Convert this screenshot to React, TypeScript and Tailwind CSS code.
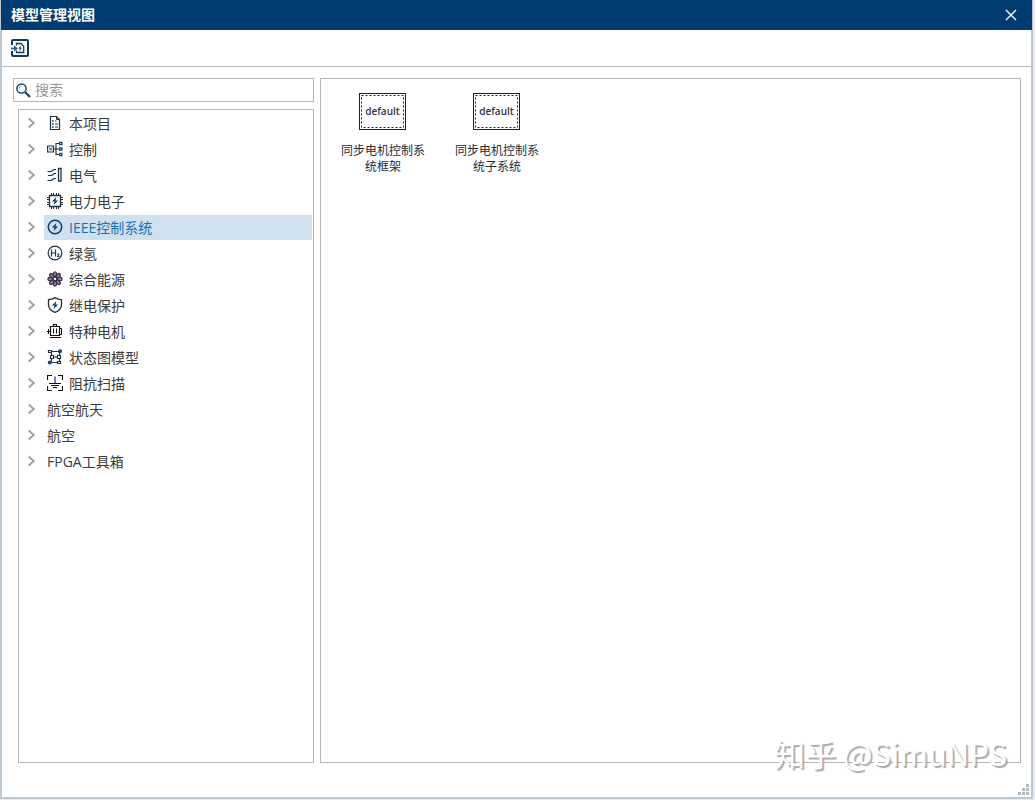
import { useState, type ReactNode } from "react";

const ink = "#26303c";
const navy = "#0f4672";

function Icon({ children }: { children: ReactNode }) {
  return (
    <svg viewBox="0 0 16 16" className="mb-px h-4 w-4 shrink-0" fill="none" stroke={ink} strokeWidth="1.2" aria-hidden="true">
      {children}
    </svg>
  );
}

const bolt = <path d="M9.3 4 4.8 8.6h2.6L6.7 12l4.5-4.6H8.6z" fill={navy} stroke="none" />;

const ProjectIcon = () => (
  <Icon>
    <path d="M3.500 1.500h6l3 3v10h-9z" />
    <path d="M9.500 1.500v3h3" strokeWidth="1" />
    <path d="M5 6h1.700M5 9h1.700M5 12h1.700" stroke={navy} strokeWidth="1.700" />
    <path d="M8 6h1.500M8 9h3M8 12h3" />
  </Icon>
);

const ControlIcon = () => (
  <Icon>
    <path d="M.5 5h6v6h-6z" />
    <path d="m2 6.500 3 3M5 6.500l-3 3" strokeWidth="1" />
    <path d="M6.500 8h6M9 8V2.500h3.500M9 8v5.500h3.500" />
    <g fill="#fff" stroke={navy} strokeWidth="1.300">
      <path d="M12.700 1.400h2.200v2.200h-2.200zM12.700 6.900h2.200v2.200h-2.200zM12.700 12.400h2.200v2.200h-2.200z" />
    </g>
  </Icon>
);

const ElectricIcon = () => (
  <Icon>
    <path d="M.5 4.500h4M6.500 2.500H9M1 8.500h4M7 6.500h2M.5 13.500h4M6.500 11.500H9" />
    <path d="m4 4.500 3-2M4.500 8.500l3-2M4 13.500l3-2" stroke={navy} strokeWidth="1.500" />
    <path d="M11.500 1.500h2.500v12.500h-2.500z" strokeWidth="1.300" />
  </Icon>
);

const ChipIcon = () => (
  <Icon>
    <path d="M2.500 2.500h11v11h-11z" strokeWidth="1.300" />
    <path d="M4.500 0v2.500M6.500 0v2.500M9.500 0v2.500M11.500 0v2.500M4.500 13.500V16M6.500 13.500V16M9.500 13.500V16M11.500 13.500V16M0 4.500h2.500M0 6.500h2.500M0 9.500h2.500M0 11.500h2.500M13.500 4.500H16M13.500 6.500H16M13.500 9.500H16M13.500 11.500H16" strokeWidth="1" />
    {bolt}
  </Icon>
);

const BoltCircleIcon = () => (
  <Icon>
    <circle cx="8" cy="8" r="6.700" stroke="#143a66" strokeWidth="1.500" />
    {bolt}
  </Icon>
);

const HydrogenIcon = () => (
  <Icon>
    <circle cx="8" cy="8" r="6.800" strokeWidth="1.200" />
    <path d="M4.500 4.500v7M8.500 4.500v7M4.500 8h4" stroke="#123c5c" strokeWidth="1.200" />
    <path d="M10 9h2v1.200l-2 1.300h2.500" stroke={navy} strokeWidth="1" />
  </Icon>
);

const EnergyIcon = () => (
  <Icon>
    <g stroke="#3f3147" strokeWidth="1.300">
      {[0, 45, 90, 135, 180, 225, 270, 315].map((angle) => (
        <path key={angle} d="M8 6.500C5.800 4.500 6 .9 8 .9s2.200 3.600 0 5.600z" fill="#9a8fa0" transform={`rotate(${angle} 8 8)`} />
      ))}
      <circle cx="8" cy="8" r="1.800" fill="#fff" />
    </g>
  </Icon>
);

const ShieldIcon = () => (
  <Icon>
    <path d="M8 .6c2 1.400 4 2 6.500 2.100v5c0 3.700-2.600 6.100-6.500 7.700-3.900-1.600-6.500-4-6.500-7.700v-5C4 2.600 6 2 8 .6z" strokeWidth="1.300" />
    {bolt}
  </Icon>
);

const MotorIcon = () => (
  <Icon>
    <g stroke="#111" strokeWidth="1">
      <path d="M3.500 3.500h9v9h-9zM6.500 3.500v-2h3v2" strokeWidth="1.200" />
      <path d="M6.500 5.500v5M9.500 5.500v5" />
      <path d="M0 8.500h3.500M1.500 6v5M12.500 5.500h2v6h-2" />
      <path d="M3 14.500h11" />
    </g>
  </Icon>
);

const StateIcon = () => (
  <Icon>
    <path d="M1.500 1.500h3v2h-3zM3.500 6.500h3v3h-3zM10.500 6.500h3v3h-3zM10.500 12.500h3v2h-3z" />
    <path d="M5 2.500h6M6.500 8h4M4 13.500h6.500M4.500 4v2.500M4.500 9.500v3M12.500 9.500v3M12.500 3.500v3" />
    <circle cx="13" cy="2.300" r="2" fill={navy} stroke="none" />
    <circle cx="2.800" cy="13.500" r="2" fill={navy} stroke="none" />
  </Icon>
);

const ScanIcon = () => (
  <Icon>
    <path d="M.5 5V.5h4.500M11 .5h4.500V5M.5 11v4.500H5M15.500 11v4.500H11" stroke="#111" />
    <path d="M8 1.500V8" stroke="#4a4f8a" strokeWidth="1.500" />
    <path d="M2 8.500h12M4 10.500h8M6 12.500h4" stroke="#111" strokeWidth="1" />
  </Icon>
);

const nodes: { label: string; icon?: () => ReactNode }[] = [
  { label: "本项目", icon: ProjectIcon },
  { label: "控制", icon: ControlIcon },
  { label: "电气", icon: ElectricIcon },
  { label: "电力电子", icon: ChipIcon },
  { label: "IEEE控制系统", icon: BoltCircleIcon },
  { label: "绿氢", icon: HydrogenIcon },
  { label: "综合能源", icon: EnergyIcon },
  { label: "继电保护", icon: ShieldIcon },
  { label: "特种电机", icon: MotorIcon },
  { label: "状态图模型", icon: StateIcon },
  { label: "阻抗扫描", icon: ScanIcon },
  { label: "航空航天" },
  { label: "航空" },
  { label: "FPGA工具箱" },
];

const models = ["同步电机控制系统框架", "同步电机控制系统子系统"];

function ModelThumb() {
  return (
    <svg viewBox="0 0 48 38" className="h-[38px] w-12" aria-hidden="true">
      <rect x=".5" y=".5" width="46" height="36" fill="#fff" stroke="#222" />
      <rect x="2.500" y="2.500" width="42" height="32" fill="none" stroke="#222" strokeDasharray="2 2" />
      <text x="23.500" y="22" textAnchor="middle" fontSize="10" fontWeight="600" fill="#33334a" fontFamily="'Open Sans', sans-serif">
        default
      </text>
    </svg>
  );
}

export default function App() {
  const [selected, setSelected] = useState("IEEE控制系统");
  const [query, setQuery] = useState("");

  return (
    <div className="h-screen bg-[#e4edf5] pr-0.5 pb-px font-['Open_Sans','Noto_Sans_CJK_SC',sans-serif] text-sm text-[#3c3c3c]">
      <div className="relative flex h-full flex-col border-x-2 border-b-2 border-[#bcc8d2] bg-white">
        <header className="-mx-px flex h-[30px] shrink-0 items-center justify-between bg-[#003c71] pr-[15px] pl-[10px] text-white">
          <h1 className="text-sm leading-5 font-bold">模型管理视图</h1>
          <button type="button" aria-label="关闭" className="flex h-5 w-3 items-center justify-center">
            <svg viewBox="0 0 12 12" className="h-3 w-3" stroke="#e4f4ff" strokeWidth="1.500">
              <path d="m1 1 10 10M11 1 1 11" />
            </svg>
          </button>
        </header>

        <div className="flex h-[37px] shrink-0 items-center border-b border-[#b9bec4] pl-[9px]">
          <button type="button" aria-label="导入模型">
            <svg viewBox="0 0 18 18" className="h-[18px] w-[18px]" fill="none" stroke="#12395c">
              <path d="M1 6V2q0-1 1-1h14q1 0 1 1v14q0 1-1 1H2q-1 0-1-1v-4" strokeWidth="2" />
              <path d="M5.500 6.500v-2h4.500l2.700 2.700v6.300H5.500v-2" strokeWidth="1.300" />
              <path d="M0 9.500h4" strokeWidth="1.700" stroke="#2b6391" />
              <path d="m3 6.300 4 3.200-4 3.200z" fill="#2b6391" stroke="none" />
              <path d="m9.800 6.300-2.300 3.200h1.300l-.5 2.700 2.600-3.400H9.500z" fill="#12395c" stroke="none" />
            </svg>
          </button>
        </div>

        <main className="flex min-h-0 flex-1 gap-1.5 pt-[11px] pr-[10px] pb-[34px] pl-[11px]">
          <aside className="flex w-[301px] shrink-0 flex-col gap-[7px]">
            <label className="flex h-6 shrink-0 items-center gap-1 border border-[#b5b5b5] pl-0.5">
              <svg viewBox="0 0 15 15" className="h-[15px] w-[15px] shrink-0" fill="none" stroke="#174a78">
                <circle cx="5.500" cy="5.500" r="4.600" strokeWidth="1.500" />
                <path d="m9 9 5 5" strokeWidth="2.400" />
                <path d="M3 5.500Q3 3.200 5.200 3" stroke="#6f93b3" />
              </svg>
              <input
                type="text"
                value={query}
                onChange={(e) => setQuery(e.target.value)}
                placeholder="搜索"
                aria-label="搜索"
                className="min-w-0 flex-1 leading-5 outline-none placeholder:text-[#989898]"
              />
            </label>

            <ul className="ml-[5px] min-h-0 flex-1 overflow-hidden border border-[#b5b5b5] pr-px">
              {nodes.map(({ label, icon: NodeIcon }) => (
                <li key={label} className="flex h-[26px] pt-px">
                  <button type="button" aria-label={`展开 ${label}`} className="flex w-[25px] shrink-0 items-center justify-center pb-px">
                    <svg viewBox="0 0 8 12" className="h-3 w-2" fill="none" stroke="#a3a3a3" strokeWidth="2">
                      <path d="m.7 1.500 5 4.500-5 4.500" />
                    </svg>
                  </button>
                  <button
                    type="button"
                    onClick={() => setSelected(label)}
                    className={`flex flex-1 items-center gap-1.5 pl-[3px] text-left leading-5 ${
                      selected === label ? "bg-[#cfe1ef] text-[#1a70b4]" : ""
                    }`}
                  >
                    {NodeIcon && <NodeIcon />}
                    {label}
                  </button>
                </li>
              ))}
            </ul>
          </aside>

          <section className="flex min-w-0 flex-1 items-start gap-[26px] border border-[#b5b5b5] pt-[14px] pl-[18px]">
            {models.map((name) => (
              <button
                key={name}
                type="button"
                className="flex w-[88px] flex-col items-center gap-3 text-xs leading-4 text-[#2b2b33]"
              >
                <ModelThumb />
                <span>{name}</span>
              </button>
            ))}
          </section>
        </main>

        <svg viewBox="0 0 11 11" className="absolute right-0.5 bottom-0.5 h-[11px] w-[11px]" fill="#b4b8bc" aria-hidden="true">
          <path d="M8 0h3v3H8zM4 4h3v3H4zM8 4h3v3H8zM0 8h3v3H0zM4 8h3v3H4zM8 8h3v3H8z" />
        </svg>

        <div className="pointer-events-none absolute right-6 bottom-6 font-['Noto_Sans_CJK_SC',sans-serif] text-[31px] leading-10 text-white [text-shadow:2px_2px_1px_#aaa]">
          知乎 @SimuNPS
        </div>
      </div>
    </div>
  );
}
